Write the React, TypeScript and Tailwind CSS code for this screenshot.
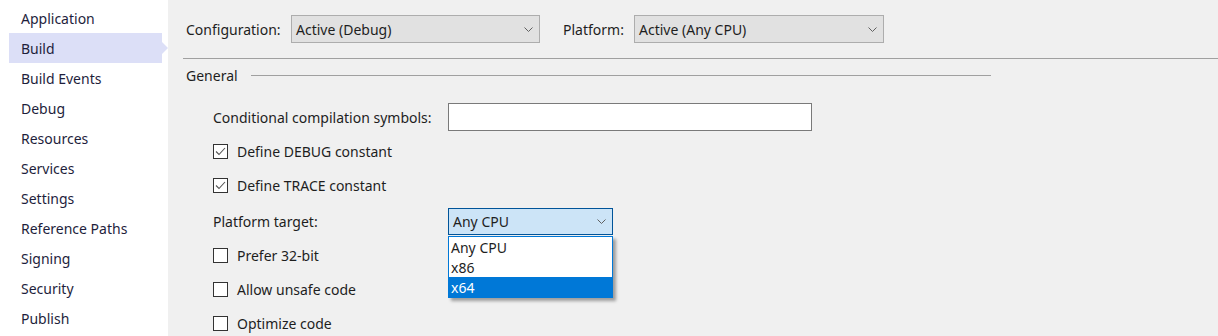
const PAGES = ['Application', 'Build', 'Build Events', 'Debug', 'Resources', 'Services', 'Settings', 'Reference Paths', 'Signing', 'Security', 'Publish']

function Chevron() {
  return (
    <svg width="9" height="5" viewBox="0 0 9 5" className="shrink-0">
      <path d="M0.5 0.5 L4.5 4.5 L8.5 0.5" fill="none" stroke="#606060" strokeWidth="1" />
    </svg>
  )
}

function Combo({ value, width }: { value: string; width: string }) {
  return (
    <div className={`${width} h-[28px] flex items-center justify-between pl-[4px] pr-[6px] bg-[#e1e1e1] border border-[#adadad]`}>
      <span>{value}</span>
      <Chevron />
    </div>
  )
}

function CheckRow({ label, checked }: { label: string; checked?: boolean }) {
  return (
    <div className="h-[34px] flex items-center">
      <div className="w-[15px] h-[15px] border border-[#333333] bg-white flex items-center justify-center">
        {checked && (
          <svg width="11" height="9" viewBox="0 0 11 9">
            <path d="M1 4.5 L4 7.5 L10 1" fill="none" stroke="#555555" strokeWidth="1.1" />
          </svg>
        )}
      </div>
      <span className="ml-[9px]">{label}</span>
    </div>
  )
}

export default function App() {
  return (
    <div className="w-[1218px] h-[336px] flex overflow-hidden bg-[#f0f0f0] text-[14px] text-[#1e1e1e]"
      style={{ fontFamily: '"Noto Sans", "Segoe UI", sans-serif' }}>
      {/* Side nav */}
      <div className="w-[168px] shrink-0 bg-white pt-[3px]">
        {PAGES.map(p => p === 'Build' ? (
          <div key={p} className="relative h-[30px] ml-[9px] w-[153px] bg-[#dcdff7] flex items-center pl-[12px] text-[#1e1e3c]">
            {p}
            <div className="absolute left-full top-[9px] w-0 h-0 border-y-[6px] border-y-transparent border-l-[6px] border-l-[#dcdff7]" />
          </div>
        ) : (
          <div key={p} className="h-[30px] flex items-center pl-[21px] text-[#1e1e3c]">{p}</div>
        ))}
      </div>

      {/* Main */}
      <div className="flex-1 pl-[15px]">
        <div className="h-[59px] flex items-center pl-[3px] border-b border-[#a0a0a0]">
          <span className="w-[105px]">Configuration:</span>
          <Combo value="Active (Debug)" width="w-[249px]" />
          <span className="ml-[23px] w-[71px]">Platform:</span>
          <Combo value="Active (Any CPU)" width="w-[250px]" />
        </div>

        <div className="h-[32px] flex items-center pl-[3px] w-[808px]">
          <span>General</span>
          <div className="flex-1 ml-[13px] h-px bg-[#a0a0a0]" />
        </div>

        <div className="mt-[9px] pl-[30px]">
          <div className="h-[34px] flex items-center">
            <span className="w-[235px]">Conditional compilation symbols:</span>
            <div className="w-[364px] h-[28px] bg-white border border-[#7a7a7a]" />
          </div>
          <CheckRow label="Define DEBUG constant" checked />
          <CheckRow label="Define TRACE constant" checked />
          <div className="h-[36px] pt-[3px] flex items-center">
            <span className="w-[235px]">Platform target:</span>
            <div className="relative">
              <div className="w-[165px] h-[27px] flex items-center justify-between pl-[4px] pr-[6px] bg-[#cce4f7] border border-[#005499]">
                <span>Any CPU</span>
                <Chevron />
              </div>
              <div className="absolute left-0 top-[28px] w-[165px] bg-white border border-[#0078d7] shadow-[3px_3px_3px_rgba(0,0,0,0.35)] z-10">
                <div className="h-[20px] flex items-center pl-[2px]">Any CPU</div>
                <div className="h-[20px] flex items-center pl-[2px]">x86</div>
                <div className="h-[20px] flex items-center pl-[2px] bg-[#0078d7] text-white">x64</div>
              </div>
            </div>
          </div>
          <CheckRow label="Prefer 32-bit" />
          <CheckRow label="Allow unsafe code" />
          <CheckRow label="Optimize code" />
        </div>
      </div>
    </div>
  )
}
